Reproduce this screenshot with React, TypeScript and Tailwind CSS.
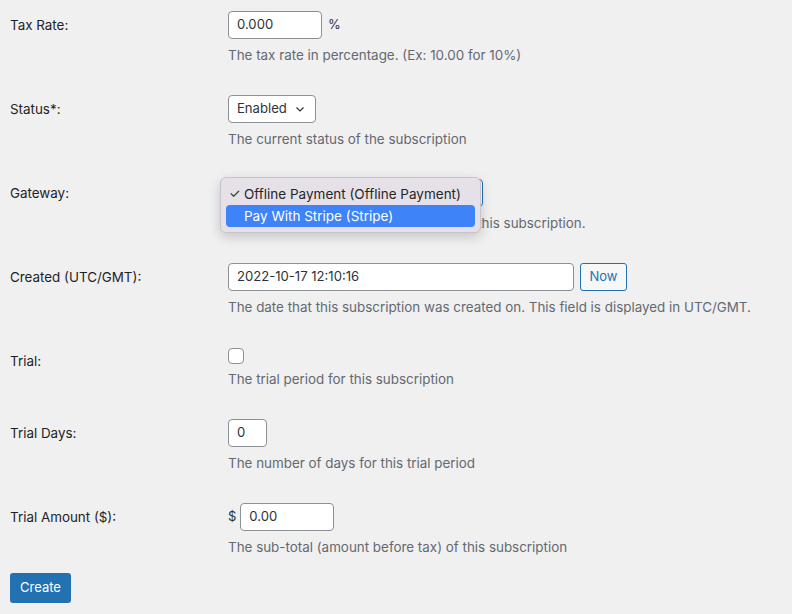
import type { FC, ReactNode } from "react";

type RowProps = {
  label: string;
  description: string;
  children: ReactNode;
  descClass?: string;
};

const Row: FC<RowProps> = ({ label, description, children, descClass = "mt-[6px]" }) => (
  <div className="flex">
    <div className="w-[218px] shrink-0 pt-[21px] text-[13.4px] leading-[17px] text-[#1d2327]">
      {label}
    </div>
    <div className="py-[15px]">
      {children}
      <p className={`${descClass} text-[13.4px] leading-[20px] text-[#646970]`}>{description}</p>
    </div>
  </div>
);

const inputCls =
  "h-[28px] rounded-[4px] border border-[#8c8f94] bg-white px-[8px] text-[13.1px] text-[#2c3338] flex items-center";

const Chevron = () => (
  <svg width="10" height="10" viewBox="0 0 10 10" className="ml-[8px]">
    <path d="M1.5 3.5 L5 7 L8.5 3.5" fill="none" stroke="#2c3338" strokeWidth="1.2" />
  </svg>
);

export default function App() {
  return (
    <div
      className="min-h-[614px] w-[792px] overflow-hidden bg-[#f0f0f1] pl-[10px]"
      style={{ fontFamily: 'Inter, "Liberation Sans", sans-serif' }}
    >
      <div className="-mt-[4px]">
        <Row label="Tax Rate:" description="The tax rate in percentage. (Ex: 10.00 for 10%)">
          <div className="flex items-center">
            <div className={`${inputCls} w-[94px]`}>0.000</div>
            <span className="ml-[6px] text-[13px] text-[#2c3338]">%</span>
          </div>
        </Row>

        <Row label="Status*:" description="The current status of the subscription">
          <div className={`${inputCls} w-[88px]`}>
            Enabled
            <Chevron />
          </div>
        </Row>

        <Row label="Gateway:" description="The payment gateway used to process this subscription.">
          <div className="relative">
            <div className={`${inputCls} w-[255px] border-[#2271b1]`} />
            <div className="absolute left-[-8px] top-[-2px] z-10 w-[261px] rounded-[6px] border border-[#c9c4cc] bg-[#e6e1e8] px-[5px] py-[5px] text-[13.5px] text-[#262626] shadow-[0_4px_12px_rgba(0,0,0,0.18)]">
              <div className="flex h-[22px] items-center">
                <span className="w-[18px] pl-[3px] text-[13px]">✓</span>
                <span>Offline Payment (Offline Payment)</span>
              </div>
              <div className="flex h-[22px] items-center rounded-[4px] bg-[#3f83f8] text-white">
                <span className="w-[18px]" />
                <span>Pay With Stripe (Stripe)</span>
              </div>
            </div>
          </div>
        </Row>

        <Row
          label="Created (UTC/GMT):"
          description="The date that this subscription was created on. This field is displayed in UTC/GMT."
        >
          <div className="flex items-center">
            <div className={`${inputCls} w-[346px]`}>2022-10-17 12:10:16</div>
            <button className="ml-[6px] h-[28px] w-[47px] rounded-[3px] border border-[#2271b1] bg-[#f6f7f7] text-[13px] text-[#2271b1]">
              Now
            </button>
          </div>
        </Row>

        <Row label="Trial:" description="The trial period for this subscription" descClass="mt-[5px]">
          <div className="mt-[1px] h-[16px] w-[16px] rounded-[4px] border border-[#8c8f94] bg-white" />
        </Row>

        <Row label="Trial Days:" description="The number of days for this trial period">
          <div className={`${inputCls} w-[39px]`}>0</div>
        </Row>

        <Row label="Trial Amount ($):" description="The sub-total (amount before tax) of this subscription">
          <div className="flex items-center">
            <span className="mr-[4px] text-[13px] text-[#2c3338]">$</span>
            <div className={`${inputCls} w-[94px]`}>0.00</div>
          </div>
        </Row>
      </div>

      <button className="mt-[1px] h-[30px] w-[61px] rounded-[3px] bg-[#2271b1] text-[13px] text-white">
        Create
      </button>
    </div>
  );
}
